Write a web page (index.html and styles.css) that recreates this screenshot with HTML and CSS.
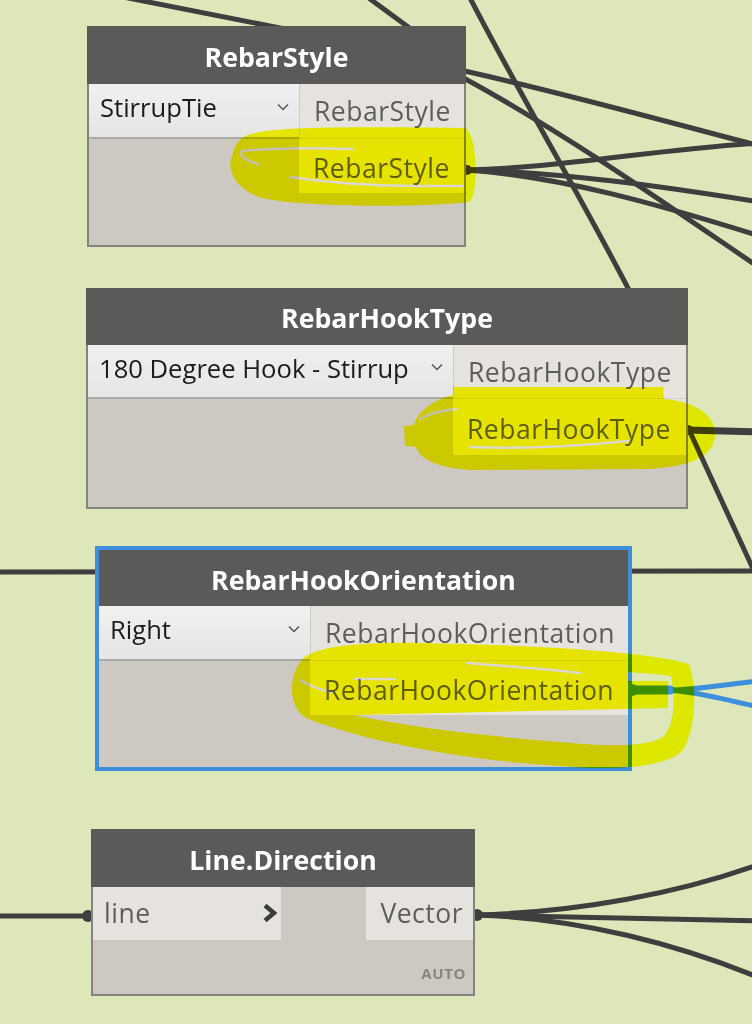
FILE: index.html
```html
<!DOCTYPE html>
<html lang="en">
<head>
<meta charset="utf-8">
<title>Dynamo nodes</title>
<link rel="stylesheet" href="styles.css">
</head>
<body>
<div class="canvas">
  <svg class="layer wires" width="752" height="1024" viewBox="0 0 752 1024">
    <g fill="none" stroke="#3e3e3e" stroke-width="5" stroke-linecap="round">
      <path d="M118 -4 L300 32"/>
      <path d="M366 -4 L415 32"/>
      <path d="M469 -4 C520 95, 580 195, 630 292"/>
      <path d="M460 70 C560 92, 660 120, 760 146"/>
      <path d="M460 76 C560 130, 660 200, 760 268"/>
      <path d="M466 170 C560 168, 650 150, 760 143"/>
      <path d="M466 170 C560 172, 660 186, 760 202"/>
      <path d="M466 170 C560 176, 660 205, 760 236"/>
      <path d="M686 430 L760 432" stroke-width="7"/>
      <path d="M690 432 L760 584"/>
      <path d="M-5 572 L760 571"/>
      <path d="M-5 916 L90 916"/>
      <path d="M476 915 C580 912, 680 893, 760 864"/>
      <path d="M476 915 L760 921"/>
      <path d="M476 915 C580 918, 680 945, 760 978"/>
    </g>
    <g fill="#3e3e3e">
      <circle cx="467" cy="170" r="5"/>
      <circle cx="688" cy="430" r="5"/>
      <circle cx="88" cy="916" r="6"/>
      <circle cx="477" cy="915" r="6"/>
    </g>
    <g fill="none" stroke="#3d8edb" stroke-width="5" stroke-linecap="round">
      <path d="M630 690 L670 690" stroke-width="9"/>
      <path d="M668 690 C700 690, 725 684, 760 681"/>
      <path d="M668 690 C700 692, 725 700, 760 707"/>
    </g>
    <circle cx="632" cy="690" r="6" fill="#3d8edb"/>
  </svg>

  <div class="node n1">
    <div class="hdr">RebarStyle</div>
    <div class="body">
      <div class="dd"><span>StirrupTie</span><svg class="chev" width="12" height="8" viewBox="0 0 12 8"><polyline points="1,1.5 6,6.5 11,1.5"/></svg></div>
      <div class="port pin">RebarStyle</div>
      <div class="blank"></div>
      <div class="port pout">RebarStyle</div>
    </div>
  </div>

  <div class="node n2">
    <div class="hdr">RebarHookType</div>
    <div class="body">
      <div class="dd"><span>180 Degree Hook - Stirrup</span><svg class="chev" width="12" height="8" viewBox="0 0 12 8"><polyline points="1,1.5 6,6.5 11,1.5"/></svg></div>
      <div class="port pin">RebarHookType</div>
      <div class="blank"></div>
      <div class="port pout">RebarHookType</div>
    </div>
  </div>

  <div class="node n3 selected">
    <div class="hdr">RebarHookOrientation</div>
    <div class="body">
      <div class="dd"><span>Right</span><svg class="chev" width="12" height="8" viewBox="0 0 12 8"><polyline points="1,1.5 6,6.5 11,1.5"/></svg></div>
      <div class="port pin">RebarHookOrientation</div>
      <div class="blank"></div>
      <div class="port pout">RebarHookOrientation</div>
    </div>
  </div>

  <div class="node n4">
    <div class="hdr">Line.Direction</div>
    <div class="body">
      <div class="port in4"><span>line</span><svg class="arrow" width="16" height="20" viewBox="0 0 16 20"><polyline points="3,2.5 12,10 3,17.5"/></svg></div>
      <div class="gap"></div>
      <div class="port out4">Vector</div>
      <div class="auto">AUTO</div>
    </div>
  </div>

  <svg class="layer hl" width="752" height="1024" viewBox="0 0 752 1024">
    <g fill="#ffff00">
      <path d="M240 140 C250 128, 300 126, 465 128 C478 135, 479 195, 469 202 C420 208, 300 207, 262 198 C236 190, 226 170, 232 156 C234 148, 236 144, 240 140 Z"/>
      <path d="M453 387 L663 387 L664 399 C692 401, 716 414, 715 435 C714 456, 692 466, 650 469 L470 470 C440 468, 420 460, 416 447 L405 446 L404 426 L414 425 C418 410, 436 399, 453 395 Z"/>
      <path fill-rule="evenodd" d="M300 662 C310 646, 360 642, 420 643 C540 645, 650 652, 689 664 C698 690, 695 730, 683 750 C665 770, 600 770, 560 766 C460 760, 360 740, 306 718 C290 708, 287 682, 300 662 Z M322 672 C380 663, 560 664, 671 676 C676 700, 674 728, 662 738 C640 748, 600 746, 560 742 C460 734, 370 722, 320 706 C308 698, 310 680, 322 672 Z"/>
      <path d="M310 664 L628 664 L628 681 L668 681 L668 708 L310 716 Z"/>
    </g>
    <g fill="none" stroke="#f4f2ec" stroke-width="2.5" stroke-linecap="round">
      <path d="M258 164 C245 160, 238 155, 242 151 C270 148, 320 148, 353 149"/>
      <path d="M290 177 C330 183, 380 186, 420 186 L462 186"/>
      <path d="M420 419 C430 413, 445 410, 456 409"/>
      <path d="M470 447 C520 449, 580 446, 628 441"/>
      <path d="M300 680 C310 686, 320 690, 332 692"/>
      <path d="M467 663 C500 666, 540 668, 580 673"/>
      <path d="M355 679 L395 679"/>
    </g>
  </svg>
</div>
</body>
</html>
```

FILE: styles.css
```css
* {
  box-sizing: border-box;
  margin: 0;
  padding: 0;
}

html, body {
  width: 752px;
  height: 1024px;
  overflow: hidden;
}

body {
  background: #dde7b9;
  font-family: "Open Sans", "Noto Sans", sans-serif;
}

.canvas {
  position: relative;
  width: 752px;
  height: 1024px;
}

.layer {
  position: absolute;
  left: 0;
  top: 0;
}

.wires {
  z-index: 0;
}

.hl {
  z-index: 3;
  mix-blend-mode: multiply;
  pointer-events: none;
}

/* nodes placed on the free canvas */
.node {
  position: absolute;
  z-index: 1;
  display: flex;
  flex-direction: column;
}

.n1 { left: 87px; top: 26px; width: 379px; height: 221px; }
.n2 { left: 86px; top: 288px; width: 602px; height: 221px; }
.n3 { left: 95px; top: 546px; width: 537px; height: 225px; }
.n4 { left: 91px; top: 829px; width: 384px; height: 167px; }

.hdr {
  height: 58px;
  flex: none;
  background: #5b5a58;
  color: #ffffff;
  font-weight: 700;
  font-size: 26.7px;
  display: flex;
  align-items: center;
  justify-content: center;
  padding-top: 2px;
  white-space: nowrap;
}

.n2 .hdr { height: 57px; }

.body {
  flex: 1;
  background: #cdc9c2;
  border: 2px solid #858380;
  border-top: none;
  display: grid;
  grid-template-rows: 55px 54px;
  align-content: start;
  font-size: 25.6px;
}

.n1 .body { grid-template-columns: 210px 1fr; }
.n2 .body { grid-template-columns: 365px 1fr; grid-template-rows: 54px 56px; }

.selected {
  border: 4px solid #3d8fdb;
}
.n3 .hdr { height: 56px; }
.n3 .body {
  border: none;
  grid-template-columns: 211px 1fr;
}

.dd {
  background: linear-gradient(#f0f0f0, #e5e5e5);
  border-bottom: 2px solid #acaaa6;
  color: #1c1c1c;
  display: flex;
  align-items: center;
  justify-content: space-between;
  padding: 0 10px 6px 11px;
  white-space: nowrap;
}

.chev {
  flex: none;
  margin-bottom: 2px;
}
.chev polyline {
  fill: none;
  stroke: #555555;
  stroke-width: 1.5;
}

.port {
  background: #e6e3df;
  color: #5e5d5b;
  display: flex;
  align-items: center;
  padding: 0 10px 0 14px;
  white-space: nowrap;
  font-size: 26.5px;
  letter-spacing: 0.5px;
}

.pin {
  border-left: 1px solid #cfccc8;
  border-bottom: 1px solid #d5d2cd;
}

.pout {
  grid-column: 2;
  padding-top: 3px;
}

.blank {
  grid-column: 1;
}

/* Line.Direction */
.n4 .body {
  grid-template-columns: 188px 85px 1fr;
  grid-template-rows: 53px 1fr;
}

.in4 {
  justify-content: space-between;
  padding: 0 3px 2px 11px;
}

.arrow polyline {
  fill: none;
  stroke: #3c3c3c;
  stroke-width: 4.5;
  stroke-linejoin: miter;
}

.out4 {
  justify-content: flex-end;
  padding: 0 10px 2px 8px;
}

.auto {
  grid-column: 1 / 4;
  justify-self: end;
  align-self: end;
  font-size: 15px;
  font-weight: 700;
  color: #8a857f;
  letter-spacing: 0.6px;
  padding: 0 7px 11px 0;
}
```
